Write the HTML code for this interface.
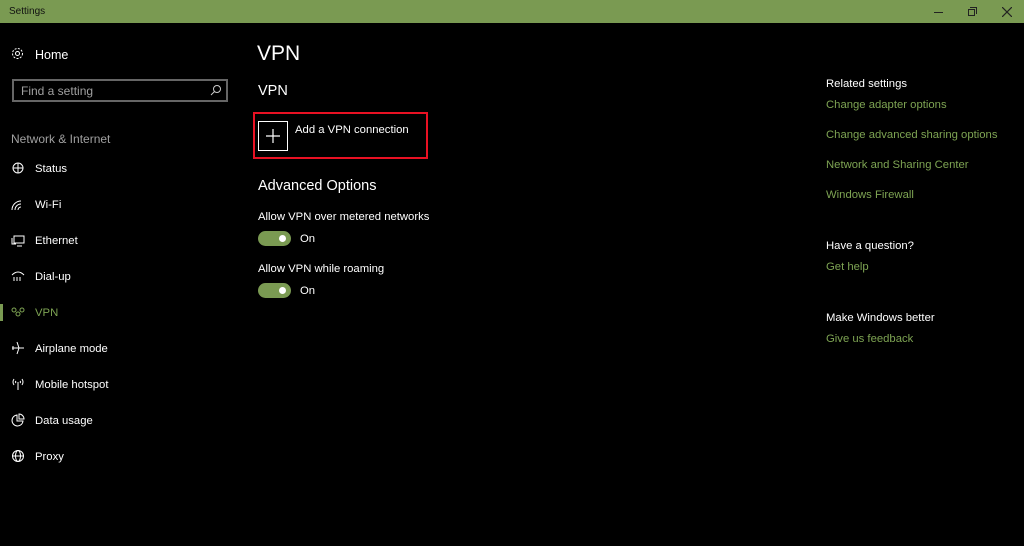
<!DOCTYPE html>
<html><head><meta charset="utf-8"><style>
*{margin:0;padding:0;box-sizing:border-box}
body{width:1024px;height:546px;background:#000;color:#fff;font-family:"Liberation Sans",sans-serif;font-size:11.3px;position:relative;overflow:hidden}
.a{position:absolute;white-space:nowrap;padding-top:1px}
.tb{position:absolute;left:0;top:0;width:1024px;height:23px;background:#7a9a52}
.g{color:#7ea453}
.gr{color:#a0a0a0}
svg{position:absolute}
.tog{position:absolute;width:33px;height:15px;border-radius:8px;background:#7a9a52}
.tog::after{content:"";position:absolute;right:5px;top:4px;width:7px;height:7px;border-radius:50%;background:#fff}
</style></head><body>
<div class="tb"></div>
<div class="a" style="left:9px;top:5px;font-size:10px;color:#111">Settings</div>
<div class="a" style="left:934px;top:12px;width:9px;height:1px;background:#222;padding:0"></div>
<div class="a" style="left:968px;top:9px;width:7px;height:7px;border:1px solid #222;padding:0"></div>
<div class="a" style="left:970px;top:7px;width:7px;height:7px;border-top:1px solid #222;border-right:1px solid #222;padding:0"></div>
<svg style="left:1002px;top:7px" width="10" height="10"><path d="M0 0L10 10M10 0L0 10" stroke="#222" stroke-width="1.2"/></svg>

<svg style="left:11px;top:47px" width="13" height="13" viewBox="0 0 13 13"><circle cx="6.5" cy="6.5" r="2" fill="none" stroke="#fff"/><circle cx="6.5" cy="6.5" r="5" fill="none" stroke="#fff" stroke-dasharray="2 1.4"/></svg>
<div class="a" style="left:35px;top:47px;font-size:12.5px">Home</div>
<div class="a" style="left:12px;top:79px;width:216px;height:23px;border:2px solid #666;padding:0"></div>
<div class="a gr" style="left:21px;top:83px;font-size:12px">Find a setting</div>
<svg style="left:210px;top:84px" width="12" height="12"><circle cx="7" cy="5" r="3.5" fill="none" stroke="#ccc"/><path d="M4.5 7.5L1 11" stroke="#ccc"/></svg>
<div class="a gr" style="left:11px;top:131px;font-size:12px">Network &amp; Internet</div>

<svg style="left:11px;top:162px" width="14" height="12"><circle cx="7" cy="6" r="5" fill="none" stroke="#fff"/><path d="M2 6h10M7 1v10" stroke="#fff"/></svg>
<div class="a" style="left:35px;top:162px">Status</div>
<svg style="left:11px;top:199px" width="14" height="12"><path d="M1 11A9 9 0 0 1 10 2M4 11A6 6 0 0 1 10 5M7 11A3 3 0 0 1 10 8" fill="none" stroke="#fff"/></svg>
<div class="a" style="left:35px;top:198px">Wi-Fi</div>
<svg style="left:11px;top:235px" width="14" height="12"><rect x="3" y="1" width="10" height="7" fill="none" stroke="#fff"/><path d="M1 3v6h4M6 11h5" stroke="#fff" fill="none"/></svg>
<div class="a" style="left:35px;top:234px">Ethernet</div>
<svg style="left:11px;top:270px" width="14" height="12"><path d="M1 5Q7 -1 13 5M3 7v4M6 7v4M9 7v4" fill="none" stroke="#fff"/></svg>
<div class="a" style="left:35px;top:270px">Dial-up</div>
<div class="a" style="left:0;top:304px;width:3px;height:17px;background:#7a9a52;padding:0"></div>
<svg style="left:11px;top:307px" width="14" height="10"><circle cx="3" cy="3" r="2" fill="none" stroke="#7ea453"/><circle cx="11" cy="3" r="2" fill="none" stroke="#7ea453"/><circle cx="7" cy="7" r="2" fill="none" stroke="#7ea453"/></svg>
<div class="a g" style="left:35px;top:306px">VPN</div>
<svg style="left:11px;top:341px" width="14" height="14"><path d="M1 7h12M6 1l2 6-2 6M2 5v4" fill="none" stroke="#fff"/></svg>
<div class="a" style="left:35px;top:342px">Airplane mode</div>
<svg style="left:11px;top:378px" width="14" height="12"><path d="M7 4v8M3 1Q1 4 3 7M11 1Q13 4 11 7M5 3Q4 4 5 5M9 3Q10 4 9 5" fill="none" stroke="#fff"/></svg>
<div class="a" style="left:35px;top:378px">Mobile hotspot</div>
<svg style="left:11px;top:413px" width="14" height="14"><path d="M6 2A5.5 5.5 0 1 0 12 8H6Z" fill="none" stroke="#fff"/><path d="M8 1v5h5A5 5 0 0 0 8 1Z" fill="none" stroke="#fff"/></svg>
<div class="a" style="left:35px;top:414px">Data usage</div>
<svg style="left:11px;top:449px" width="14" height="14"><circle cx="7" cy="7" r="5.5" fill="none" stroke="#fff"/><ellipse cx="7" cy="7" rx="2.5" ry="5.5" fill="none" stroke="#fff"/><path d="M1.5 7h11" stroke="#fff"/></svg>
<div class="a" style="left:35px;top:450px">Proxy</div>

<div class="a" style="left:257px;top:41px;font-size:21px">VPN</div>
<div class="a" style="left:258px;top:82px;font-size:14.5px">VPN</div>
<div class="a" style="left:253px;top:112px;width:175px;height:47px;border:2px solid #e81123;padding:0"></div>
<div class="a" style="left:258px;top:121px;width:30px;height:30px;border:1px solid #fff;padding:0"></div>
<svg style="left:265px;top:128px" width="16" height="16"><path d="M8 1v14M1 8h14" stroke="#fff" stroke-width="1.2"/></svg>
<div class="a" style="left:295px;top:123px">Add a VPN connection</div>
<div class="a" style="left:258px;top:177px;font-size:14.5px">Advanced Options</div>
<div class="a" style="left:258px;top:210px">Allow VPN over metered networks</div>
<div class="tog" style="left:258px;top:231px"></div>
<div class="a" style="left:300px;top:232px">On</div>
<div class="a" style="left:258px;top:262px">Allow VPN while roaming</div>
<div class="tog" style="left:258px;top:283px"></div>
<div class="a" style="left:300px;top:284px">On</div>

<div class="a" style="left:826px;top:77px">Related settings</div>
<div class="a g" style="left:826px;top:98px">Change adapter options</div>
<div class="a g" style="left:826px;top:128px">Change advanced sharing options</div>
<div class="a g" style="left:826px;top:158px">Network and Sharing Center</div>
<div class="a g" style="left:826px;top:188px">Windows Firewall</div>
<div class="a" style="left:826px;top:239px">Have a question?</div>
<div class="a g" style="left:826px;top:260px">Get help</div>
<div class="a" style="left:826px;top:311px">Make Windows better</div>
<div class="a g" style="left:826px;top:332px">Give us feedback</div>
</body></html>
